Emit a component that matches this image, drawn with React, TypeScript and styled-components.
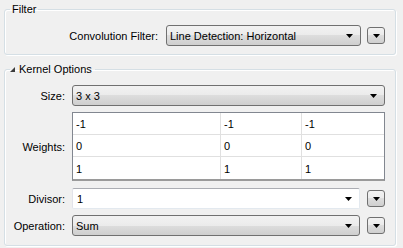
import styled, { createGlobalStyle } from "styled-components";

const GlobalStyle = createGlobalStyle`
  html, body {
    margin: 0;
    padding: 0;
    background: #f0f0f0;
  }
  body {
    font-family: "Liberation Sans", Arial, sans-serif;
    font-size: 11px;
    color: #000;
  }
`;

const weights = [
  ["-1", "-1", "-1"],
  ["0", "0", "0"],
  ["1", "1", "1"],
];

const Arrow = () => (
  <svg width="7" height="4" viewBox="0 0 7 4">
    <polygon points="0,0 7,0 3.5,4" fill="#000" />
  </svg>
);

const Caret = () => (
  <svg width="5" height="5" viewBox="0 0 5 5">
    <polygon points="5,0 5,5 0,5" fill="#3c3c3c" />
  </svg>
);

const App = () => {
  return (
    <>
      <GlobalStyle />
      <Page>
        <Group $top={0}>
          <Legend>Filter</Legend>
          <FilterRow>
            <Label>Convolution Filter:</Label>
            <Combo $width={195}>
              <span>Line Detection: Horizontal</span>
              <Arrow />
            </Combo>
            <SmallButton>
              <Arrow />
            </SmallButton>
          </FilterRow>
        </Group>

        <Group $top={7}>
          <Legend $caret>
            <Caret />
            <span>Kernel Options</span>
          </Legend>
          <KernelGrid>
            <Label>Size:</Label>
            <Combo $span>
              <span>3 x 3</span>
              <Arrow />
            </Combo>

            <Label>Weights:</Label>
            <WeightTable>
              <tbody>
                {weights.map((row, i) => (
                  <tr key={`r-${i}`}>
                    {row.map((v, j) => (
                      <Cell key={`c-${i}-${j}`}>{v}</Cell>
                    ))}
                  </tr>
                ))}
              </tbody>
            </WeightTable>

            <Label>Divisor:</Label>
            <EditCombo>
              <span>1</span>
              <Arrow />
            </EditCombo>
            <SmallButton>
              <Arrow />
            </SmallButton>

            <Label>Operation:</Label>
            <Combo>
              <span>Sum</span>
              <Arrow />
            </Combo>
            <SmallButton>
              <Arrow />
            </SmallButton>
          </KernelGrid>
        </Group>
      </Page>
    </>
  );
};

export default App;

const Page = styled.div`
  width: 403px;
  height: 248px;
  box-sizing: border-box;
  padding: 2px 7px 0 4px;
  overflow: hidden;
`;

const Group = styled.fieldset<{ $top: number }>`
  margin: ${(p) => p.$top}px 0 0 0;
  padding: 0 10px 0 0;
  border: 1px solid #d5dfe5;
  border-radius: 3px;
  box-shadow: inset 1px 1px 0 #fff, 1px 1px 0 #fff;
  min-width: 0;
`;

const Legend = styled.legend<{ $caret?: boolean }>`
  margin-left: 5px;
  padding: 0 ${(p) => (p.$caret ? "3px 0 0" : "2px")};
  line-height: 14px;
  display: flex;
  align-items: center;
  gap: 4px;
  svg {
    margin-top: 1px;
  }
`;

const FilterRow = styled.div`
  display: flex;
  justify-content: flex-end;
  align-items: center;
  padding: 9px 0 8px;
`;

const Label = styled.div`
  text-align: right;
  white-space: nowrap;
  align-self: center;
  ${FilterRow} & {
    margin-right: 8px;
  }
`;

const Combo = styled.div<{ $width?: number; $span?: boolean }>`
  box-sizing: border-box;
  height: 21px;
  ${(p) => (p.$width ? `width: ${p.$width}px;` : "")}
  ${(p) => (p.$span ? "grid-column: 2 / 4;" : "")}
  border: 1px solid #707070;
  border-radius: 3px;
  background: linear-gradient(
    #f2f2f2 0%,
    #ebebeb 50%,
    #dddddd 50%,
    #cfcfcf 100%
  );
  display: flex;
  align-items: center;
  justify-content: space-between;
  padding: 0 7px 0 3px;
  white-space: nowrap;
`;

const EditCombo = styled.div`
  box-sizing: border-box;
  height: 21px;
  border: 1px solid #e3e9ef;
  border-top-color: #abadb3;
  border-left-color: #e2e3ea;
  border-radius: 2px;
  background: #fff;
  display: flex;
  align-items: center;
  justify-content: space-between;
  padding: 0 7px 0 4px;
`;

const SmallButton = styled.div`
  box-sizing: border-box;
  width: 18px;
  height: 17px;
  border: 1px solid #707070;
  border-radius: 3px;
  background: linear-gradient(
    #f2f2f2 0%,
    #ebebeb 50%,
    #dddddd 50%,
    #cfcfcf 100%
  );
  display: flex;
  align-items: center;
  justify-content: center;
  align-self: center;
  ${FilterRow} & {
    margin-left: 6px;
  }
`;

const KernelGrid = styled.div`
  display: grid;
  grid-template-columns: 60px 1fr 18px;
  column-gap: 7px;
  row-gap: 6px;
  padding: 9px 0 9px;
`;

const WeightTable = styled.table`
  grid-column: 2 / 4;
  border-collapse: separate;
  border-spacing: 0;
  background: #fff;
  border: 1px solid #828790;
  border-bottom: 2px solid #9a9a9a;
  margin-bottom: 1px;
  table-layout: fixed;
  width: 100%;
  box-sizing: border-box;
  tr {
    height: 22px;
  }
  td:nth-child(1) {
    width: 148px;
  }
  td:nth-child(2) {
    width: 81px;
  }
  td:last-child {
    border-right: none;
  }
  tr:last-child td {
    border-bottom: none;
  }
`;

const Cell = styled.td`
  box-sizing: border-box;
  padding: 1px 3px 0;
  border-right: 1px solid #e0e0e0;
  border-bottom: 1px solid #e0e0e0;
  vertical-align: middle;
`;
